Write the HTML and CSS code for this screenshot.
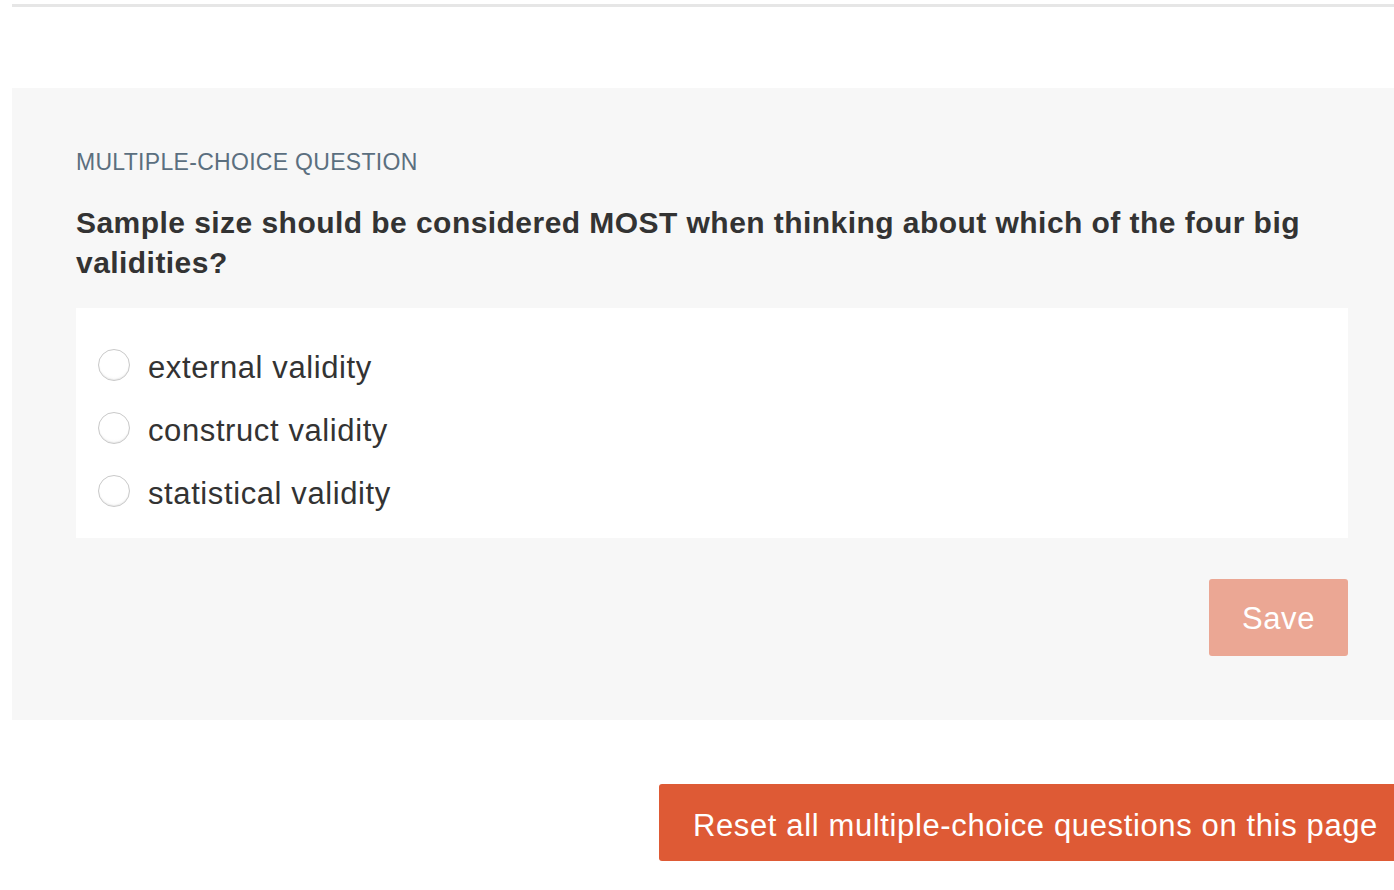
FILE: index.html
```html
<!DOCTYPE html>
<html lang="en">
<head>
<meta charset="utf-8">
<title>Multiple-choice question</title>
<link rel="stylesheet" href="styles.css">
</head>
<body>
<div class="page">
  <div class="topline"></div>
  <section class="mcq">
    <div class="mcq-label">MULTIPLE-CHOICE QUESTION</div>
    <h2 class="mcq-question">Sample size should be considered MOST when thinking about which of the four big validities?</h2>
    <div class="mcq-options">
      <label class="option"><span class="radio"></span><span class="option-text">external validity</span></label>
      <label class="option"><span class="radio"></span><span class="option-text">construct validity</span></label>
      <label class="option"><span class="radio"></span><span class="option-text">statistical validity</span></label>
    </div>
    <div class="mcq-actions">
      <button class="btn-save" type="button">Save</button>
    </div>
  </section>
  <div class="reset-row">
    <button class="btn-reset" type="button">Reset all multiple-choice questions on this page</button>
  </div>
</div>
</body>
</html>
```
FILE: styles.css
```css
html, body {
  margin: 0;
  padding: 0;
  background: #ffffff;
  overflow: hidden;
}
body {
  font-family: "Liberation Sans", Arial, Helvetica, sans-serif;
  color: #333333;
}
.page {
  width: 1400px;
  margin-left: 12px;
  padding-top: 4px;
}
.topline {
  height: 3px;
  background: #e6e6e6;
}
.mcq {
  margin-top: 81px;
  background: #f7f7f7;
  padding: 60px 64px 64px 64px;
}
.mcq-label {
  font-size: 23px;
  line-height: 28px;
  color: #5b6f7f;
  letter-spacing: 0.3px;
}
.mcq-question {
  margin: 27px 0 0 0;
  font-size: 30px;
  line-height: 40px;
  font-weight: 700;
  letter-spacing: 0.45px;
  color: #333333;
  width: 1260px;
}
.mcq-options {
  margin-top: 25px;
  background: #ffffff;
  padding: 28px 22px 13px 22px;
  display: flex;
  flex-direction: column;
}
.option {
  display: flex;
  align-items: center;
  gap: 18px;
  height: 63px;
}
.radio {
  width: 30px;
  height: 30px;
  border-radius: 50%;
  border: 1px solid #c9c9c9;
  background: radial-gradient(circle at 50% 40%, #ffffff 60%, #f1f1f1 100%);
  box-shadow: inset 0 -1px 1px rgba(0,0,0,0.06);
  flex: none;
  margin-top: -6px;
}
.option-text {
  font-size: 31px;
  line-height: 36px;
  letter-spacing: 0.6px;
  color: #333333;
}
.mcq-actions {
  display: flex;
  justify-content: flex-end;
  margin-top: 41px;
}
.btn-save {
  width: 139px;
  height: 77px;
  border: none;
  border-radius: 3px;
  background: #eba794;
  color: #ffffff;
  font-family: inherit;
  font-size: 31px;
  letter-spacing: 0.6px;
  padding: 3px 0 0 0;
}
.reset-row {
  display: flex;
  justify-content: flex-end;
  margin-top: 64px;
}
.btn-reset {
  height: 77px;
  border: none;
  border-radius: 3px;
  background: #de5a35;
  color: #ffffff;
  font-family: inherit;
  font-size: 31px;
  letter-spacing: 0.63px;
  padding: 6px 34px 0 34px;
}
```
